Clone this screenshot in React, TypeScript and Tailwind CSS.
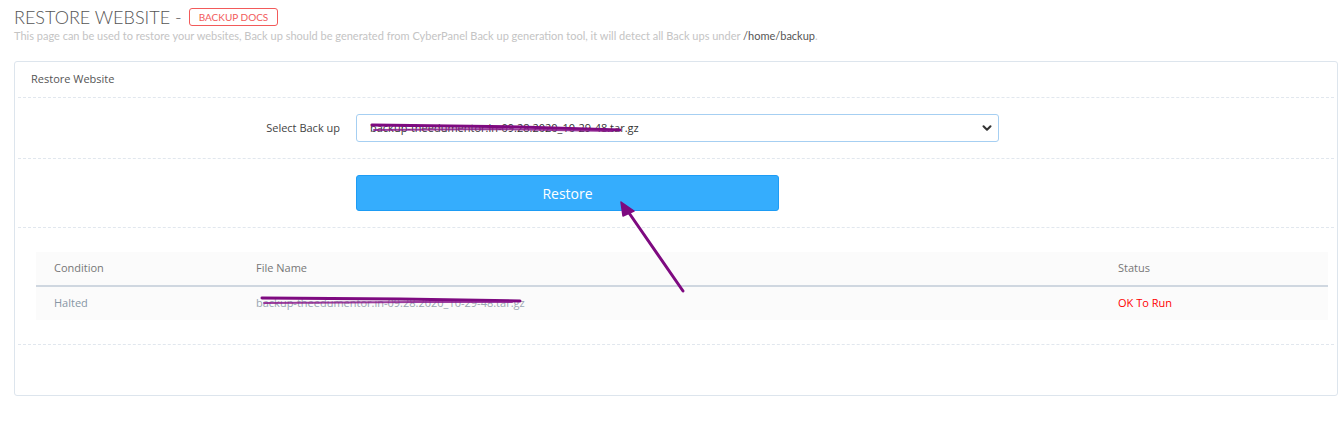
import { ChevronDown } from "lucide-react";

const backupFile = "backup-theedumentor.in-09.28.2020_10-29-48.tar.gz";

export default function App() {
  return (
    <div className="relative min-h-[444px] bg-white font-['Open_Sans',sans-serif]">
      {/* page heading */}
      <div className="px-[14px] pt-[5px]">
        <div className="flex h-[24px] items-center gap-[7px]">
          <h2 className="font-['Lato',sans-serif] text-[18px] font-light leading-none text-[#555]">
            RESTORE WEBSITE -
          </h2>
          <span className="flex h-[18px] items-center rounded-[3px] border border-[#f25a5a] px-[9px] font-['Lato',sans-serif] text-[10px] leading-none text-[#f25a5a]">
            BACKUP DOCS
          </span>
        </div>
        <p className="font-['Lato',sans-serif] text-[11px] leading-[14px] text-[#c4c4c4]">
          This page can be used to restore your websites, Back up should be generated from CyberPanel Back up
          generation tool, it will detect all Back ups under <span className="text-[#555]">/home/backup</span>.
        </p>
      </div>

      {/* card */}
      <div className="ml-[14px] mt-[18px] w-[1324px] rounded-[3px] border border-[#dde5ed] bg-white">
        <div className="mx-[3px] flex h-[36px] items-center border-b border-dashed border-[#e1e7ee] pl-[13px] text-[11px] text-[#555]">
          Restore Website
        </div>

        <div className="mx-[3px] flex h-[61px] items-center border-b border-dashed border-[#e1e7ee]">
          <label className="w-[338px] pr-[16px] text-right text-[11px] text-[#444]">Select Back up</label>
          <div className="relative w-[643px]">
            <select className="h-[28px] w-full appearance-none rounded-[3px] border border-[#a6cff2] bg-white pl-[13px] text-[11px] text-[#333] outline-none">
              <option>{backupFile}</option>
            </select>
            <ChevronDown className="pointer-events-none absolute right-[5px] top-[7px] h-[14px] w-[14px] text-[#333]" strokeWidth={3.5} />
          </div>
        </div>

        <div className="mx-[3px] border-b border-dashed border-[#e1e7ee] pb-[16px] pt-[16px]">
          <button className="ml-[338px] flex h-[36px] w-[423px] items-center justify-center rounded-[3px] border border-[#1d9cf5] bg-[#35adfd] text-[14px] text-white">
            Restore
          </button>
        </div>

        <div className="mx-[3px] border-b border-dashed border-[#e1e7ee] pb-[24px] pt-[24px]">
          <table className="ml-[18px] w-[1292px] border-collapse bg-[#fbfbfb] text-left text-[11px]">
            <thead>
              <tr className="h-[34px] border-b-2 border-[#cfd7e0] text-[#777]">
                <th className="w-[202px] pl-[18px] font-normal">Condition</th>
                <th className="w-[862px] pl-[18px] font-normal">File Name</th>
                <th className="pl-[18px] font-normal">Status</th>
              </tr>
            </thead>
            <tbody>
              <tr className="h-[34px]">
                <td className="pl-[18px] text-[#8796a5]">Halted</td>
                <td className="pl-[18px] text-[#9aa6b2]">{backupFile}</td>
                <td className="pl-[18px] text-[#ff0000]">OK To Run</td>
              </tr>
            </tbody>
          </table>
        </div>

        <div className="h-[50px]" />
      </div>

      {/* purple annotation marks laid over the screenshot */}
      <svg className="pointer-events-none absolute left-0 top-0" width="1342" height="444" viewBox="0 0 1342 444">
        <path d="M372 125 L520 127 L620 130" stroke="#7e0a80" strokeWidth="3" fill="none" strokeLinecap="round" />
        <path d="M374 130 L500 129 L612 131" stroke="#8a1a8c" strokeWidth="2" fill="none" strokeLinecap="round" opacity="0.85" />
        <path d="M262 298 L400 299 L520 301" stroke="#7e0a80" strokeWidth="3" fill="none" strokeLinecap="round" />
        <path d="M264 303 L420 302 L512 302" stroke="#8a1a8c" strokeWidth="2" fill="none" strokeLinecap="round" opacity="0.85" />
        <path d="M683 291 L627 210" stroke="#7e0a80" strokeWidth="3" fill="none" strokeLinecap="round" />
        <path d="M621 202 L634 211 L623 216 Z" fill="#7e0a80" stroke="#7e0a80" strokeWidth="1.5" strokeLinejoin="round" />
      </svg>
    </div>
  );
}
